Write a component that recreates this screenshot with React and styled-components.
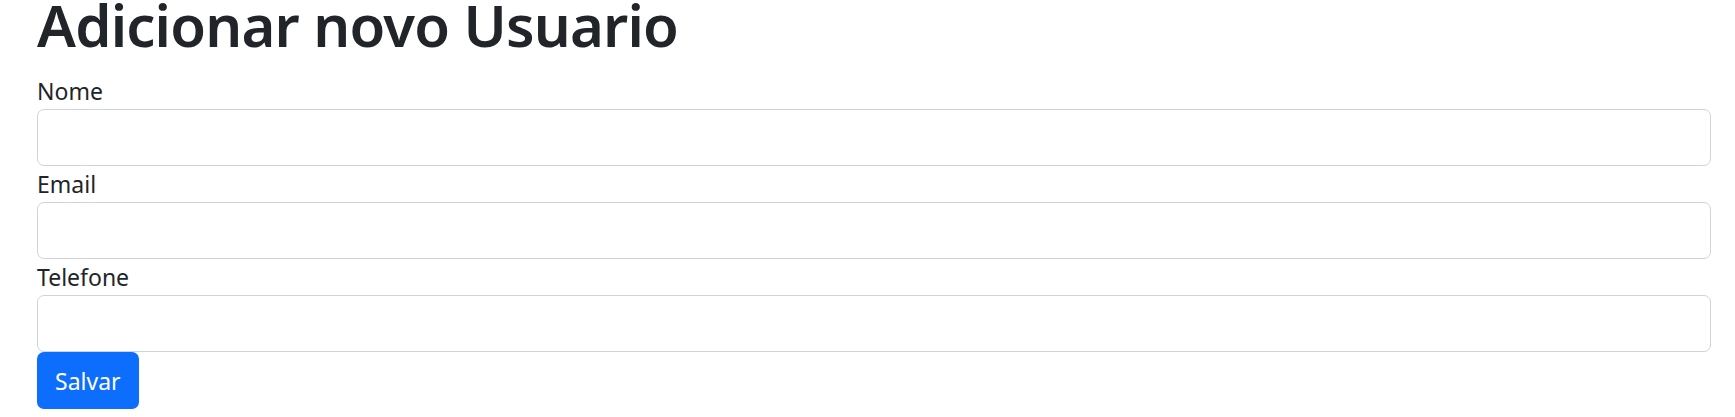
import styled, { createGlobalStyle } from "styled-components";

const GlobalStyle = createGlobalStyle`
  * { box-sizing: border-box; }
  body {
    margin: 0;
    background: #fff;
    color: #212529;
    font-family: "Noto Sans", "Open Sans", sans-serif;
  }
`;

const Page = styled.div`
  padding: 0 24px 0 37px;
  margin-top: -11px;
`;

const Title = styled.h1`
  margin: 0 0 12px;
  font-size: 58px;
  line-height: 72px;
  font-weight: 600;
  letter-spacing: -0.8px;
  color: #212529;
`;

const Form = styled.form`
  display: flex;
  flex-direction: column;
`;

const Field = styled.div`
  display: flex;
  flex-direction: column;
`;

const Label = styled.label`
  font-size: 23px;
  line-height: 36px;
  color: #212529;
`;

const Input = styled.input`
  height: 57px;
  width: 100%;
  padding: 9px 18px;
  font-size: 24px;
  font-family: inherit;
  color: #212529;
  background: #fff;
  border: 1.5px solid #ced4da;
  border-radius: 7px;
  outline: none;
`;

const Button = styled.button`
  align-self: flex-start;
  height: 57px;
  padding: 0 18px;
  font-size: 23px;
  font-family: inherit;
  color: #fff;
  background: #0d6efd;
  border: none;
  border-radius: 7px;
  cursor: pointer;
`;

function App() {
  const fields = ["Nome", "Email", "Telefone"];
  return (
    <>
      <GlobalStyle />
      <Page>
        <Title>Adicionar novo Usuario</Title>
        <Form onSubmit={(e) => e.preventDefault()}>
          {fields.map((f) => (
            <Field key={f}>
              <Label htmlFor={f}>{f}</Label>
              <Input id={f} type="text" />
            </Field>
          ))}
          <Button type="submit">Salvar</Button>
        </Form>
      </Page>
    </>
  );
}

export default App;
